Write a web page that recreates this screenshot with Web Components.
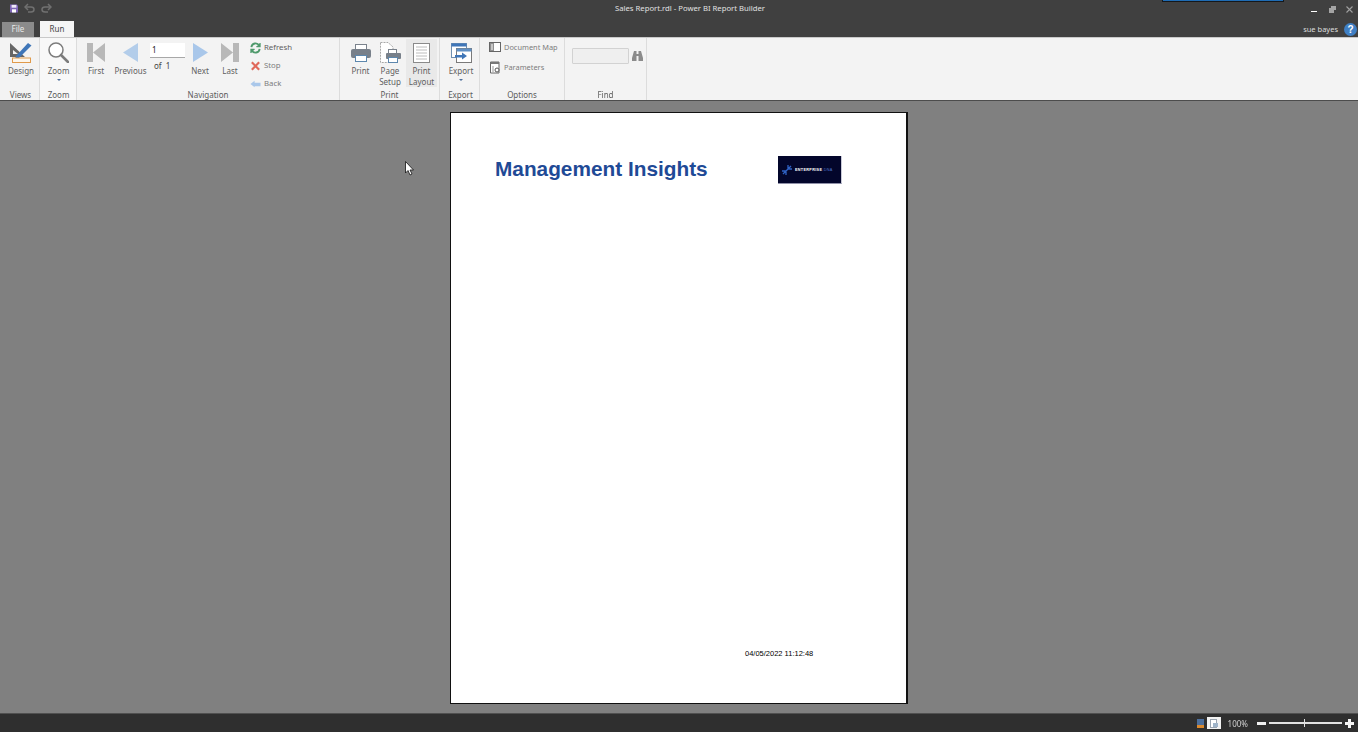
<!DOCTYPE html>
<html>
<head>
<meta charset="utf-8">
<title>Sales Report.rdl - Power BI Report Builder</title>
<style>
  html, body { margin: 0; height: 100%; overflow: hidden; }
  /* the reference is a soft video frame, hence the slight blur */
  body { display: flex; flex-direction: column; height: 732px; font-family: "Noto Sans", sans-serif; filter: blur(0.3px); }
</style>
</head>
<body>
<rb-titlebar title-text="Sales Report.rdl - Power BI Report Builder" user="sue bayes"></rb-titlebar>

<rb-ribbon>
  <rb-group label="Views" style="width:40px">
    <rb-button style="width:40px;margin-left:1px">
      <svg slot="icon" width="22" height="21" viewBox="0 0 22 21">
        <path d="M0 1 L0 15 L15 15 Z M3 8 L3 12 L8 12 Z" fill="#666" fill-rule="evenodd"/>
        <path d="M6 14 L18 1 L21.500 3.500 L9 16 L5 17 Z" fill="#3f76b8"/>
        <rect x="2.500" y="16" width="18" height="4.500" fill="#fdf6ea" stroke="#e09a4a"/>
      </svg>Design</rb-button>
  </rb-group>
  <rb-group label="Zoom" style="width:37px;background:#f8f8f8">
    <rb-button style="width:37px" drop>
      <svg slot="icon" width="21" height="21" viewBox="0 0 21 21">
        <circle cx="8" cy="8" r="7" fill="#fff" stroke="#7c7c7c" stroke-width="1.5"/>
        <path d="M13 13 L20 20" stroke="#7c7c7c" stroke-width="2.600" stroke-linecap="round"/>
      </svg>Zoom</rb-button>
  </rb-group>
  <rb-group label="Navigation" style="width:263px">
    <rb-button style="width:38px">
      <svg slot="icon" width="18" height="19" viewBox="0 0 18 19"><path d="M0 0h6v19H0z M6 9.500 L18 0 V19 Z" fill="#b8b8b8"/></svg>First</rb-button>
    <rb-button style="width:31px">
      <svg slot="icon" width="15" height="19" viewBox="0 0 15 19"><path d="M0 9.500 L15 0 V19 Z" fill="#b3cdea"/></svg>Previous</rb-button>
    <rb-pager page="1" total="1"></rb-pager>
    <rb-button style="width:30px">
      <svg slot="icon" width="15" height="19" viewBox="0 0 15 19"><path d="M15 9.500 L0 0 V19 Z" fill="#a9c7ea"/></svg>Next</rb-button>
    <rb-button style="width:30px">
      <svg slot="icon" width="18" height="19" viewBox="0 0 18 19"><path d="M12 0h6v19h-6z M12 9.500 L0 0 V19 Z" fill="#b8b8b8"/></svg>Last</rb-button>
    <rb-stack style="margin-left:5px;gap:5px">
      <rb-small style="font-size:7.800px">
        <svg slot="icon" width="11" height="12" viewBox="0 0 12 12" fill="none" stroke="#4f9a6c" stroke-width="2"><path d="M1.500 5 A4.500 4.500 0 0 1 10 3.500 M10.500 7 A4.500 4.500 0 0 1 2 8.500"/><path d="M11 0.500 V4.500 H7 M1 11.500 V7.500 H5" stroke-width="1.200" fill="#4f9a6c"/></svg>Refresh</rb-small>
      <rb-small dim style="font-size:7.800px">
        <svg slot="icon" width="11" height="12" viewBox="0 0 12 12"><path d="M2 2 L10 10 M10 2 L2 10" stroke="#e0685a" stroke-width="2.400"/></svg>Stop</rb-small>
      <rb-small dim style="font-size:7.800px">
        <svg slot="icon" width="11" height="12" viewBox="0 0 12 12"><path d="M0.500 6 L5 2.500 V4.500 H11.500 V8.500 H5 V9.500 Z" fill="#a9c7ea"/></svg>Back</rb-small>
    </rb-stack>
  </rb-group>
  <rb-group label="Print" style="width:100px;--pad:6px">
    <rb-button style="width:29px">
      <svg slot="icon" width="20" height="18" viewBox="0 0 20 18">
        <rect x="4.500" y="0.500" width="11" height="6" fill="#fff" stroke="#7a828c"/>
        <rect x="0" y="5" width="20" height="9" rx="2" fill="#78808a"/>
        <rect x="4.500" y="11.500" width="11" height="6" fill="#fff" stroke="#5d87ad"/>
      </svg>Print</rb-button>
    <rb-button style="width:30px">
      <svg slot="icon" width="21" height="21" viewBox="0 0 21 21">
        <path d="M0.500 0.500 H8 L13 5 V20.500 H0.500 Z" fill="#fff" stroke="#a8a8a8" stroke-dasharray="2 1"/>
        <rect x="8.500" y="7.500" width="8" height="5" fill="#fff" stroke="#7a828c"/>
        <rect x="6" y="11" width="15" height="6" rx="1" fill="#78808a"/>
        <rect x="8.500" y="15.500" width="9" height="5" fill="#fff" stroke="#5d87ad"/>
      </svg>Page<br>Setup</rb-button>
    <rb-button style="width:31px;margin:-2px 0 0 1px;padding-top:2px;height:48px" active>
      <svg slot="icon" width="17" height="20" viewBox="0 0 17 20">
        <rect x="0.500" y="0.500" width="16" height="19" fill="#fff" stroke="#8a8a8a"/>
        <path d="M3 4h11M3 7h11M3 10h11M3 13h11M3 16h11" stroke="#bcbcbc"/>
      </svg>Print<br>Layout</rb-button>
  </rb-group>
  <rb-group label="Export" style="width:40px">
    <rb-button style="width:40px;margin-left:1px" drop>
      <svg slot="icon" width="21" height="20" viewBox="0 0 21 20">
        <rect x="0.500" y="0.500" width="15" height="14" fill="#fff" stroke="#6f8fb0"/>
        <rect x="0.500" y="0.500" width="15" height="3" fill="#3f76b8"/>
        <rect x="5.500" y="5.500" width="15" height="14" fill="#fff" stroke="#7a7a7a"/>
        <rect x="5.500" y="5.500" width="15" height="3" fill="#5f8fc4"/>
        <path d="M4 12 H11 V9.500 L16 13 L11 16.500 V14.500 H4 Z" fill="#3f76b8"/>
      </svg>Export</rb-button>
  </rb-group>
  <rb-group label="Options" style="width:85px;--pad:9px">
    <rb-stack style="gap:7px">
      <rb-small dim style="font-size:7.400px">
        <svg slot="icon" width="12" height="11" viewBox="0 0 12 11"><rect x="0.500" y="0.500" width="11" height="9" fill="#fff" stroke="#666"/><rect x="1" y="1" width="4" height="8" fill="#8f8f8f"/><path d="M2 3h2M2 5h2M2 7h2" stroke="#fff"/></svg>Document Map</rb-small>
      <rb-small dim style="font-size:7.400px">
        <svg slot="icon" width="12" height="13" viewBox="0 0 12 13"><path d="M1.500 1 H10 V12 H1.500 Z" fill="#fff" stroke="#666"/><rect x="1.500" y="1" width="8.500" height="2" fill="#777"/><path d="M3 6h2M3 8h2M3 10h2" stroke="#999"/><circle cx="8" cy="9" r="2" fill="#fff" stroke="#555"/></svg>Parameters</rb-small>
    </rb-stack>
  </rb-group>
  <rb-group label="Find" style="width:82px;--pad:7px">
    <rb-find></rb-find>
  </rb-group>
</rb-ribbon>

<rb-viewer>
  <rb-page>
    <span slot="title">Management Insights</span>
    <rb-logo slot="logo"></rb-logo>
    <span slot="date">04/05/2022 11:12:48</span>
  </rb-page>
</rb-viewer>

<rb-statusbar zoom="100%"></rb-statusbar>

<script>
function define(name, css, html) {
  customElements.define(name, class extends HTMLElement {
    connectedCallback() {
      if (this.shadowRoot) return;
      this.attachShadow({ mode: 'open' });
      this.shadowRoot.innerHTML = `<style>${css}</style>${typeof html === 'function' ? html(this) : html}`;
    }
  });
}

// ---- window chrome
define('rb-titlebar', `
  :host { display: block; height: 37px; background: #404040; position: relative; color: #e6e6e6; font: 8px "Noto Sans", sans-serif; flex: none; }
  .row1 { display: grid; grid-template-columns: 1fr auto 1fr; height: 21px; align-items: center; }
  .qat { display: flex; gap: 6px; padding: 0 0 5px 10px; align-items: center; }
  .title { padding: 0 0 6px 22px; color: #e0e0e0; font-size: 7.700px; }
  .win { display: flex; justify-content: flex-end; gap: 10px; padding: 0 5px 3px 0; align-items: center; }
  .row2 { display: flex; height: 16px; align-items: flex-end; padding-left: 2px; }
  .tab { height: 15px; line-height: 14px; text-align: center; }
  .file { width: 32px; background: #8b8b8b; color: #e8e8e8; }
  .run { width: 34px; height: 16px; line-height: 16px; margin-left: 6px; background: #f5f5f5; color: #444; }
  .user { margin-left: auto; align-self: center; display: flex; align-items: center; gap: 6px; padding-right: 1px; color: #dcdcdc; font-size: 7.500px; }
  .help { width: 13px; height: 13px; border-radius: 50%; background: #3f7fc4; color: #fff; font: bold 10px/13px "Liberation Sans", sans-serif; text-align: center; }
  .flash { position: absolute; left: 1162px; top: 0; width: 120px; height: 1px; background: #1f6cb4; border-bottom: 1px solid #15181c; border-left: 1px solid #15181c; border-right: 1px solid #15181c; }
`, (el) => `
  <div class="flash"></div>
  <div class="row1">
    <div class="qat">
      <svg width="8" height="9" viewBox="0 0 10 10"><path d="M0 0h8.500L10 1.500V10H0z" fill="#7f66b8"/><rect x="2" y="0.500" width="6" height="3.500" fill="#efeaf8"/><rect x="2.500" y="6" width="5" height="4" fill="#fff"/></svg>
      <svg width="11" height="10" viewBox="0 0 11 10" fill="none" stroke="#707070" stroke-width="1.500"><path d="M1 4 H7 A3 2.500 0 0 1 7 9 H4"/><path d="M4 1 L1 4 L4 7"/></svg>
      <svg width="11" height="10" viewBox="0 0 11 10" fill="none" stroke="#707070" stroke-width="1.500"><path d="M10 4 H4 A3 2.500 0 0 0 4 9 H7"/><path d="M7 1 L10 4 L7 7"/></svg>
    </div>
    <div class="title">${el.getAttribute('title-text')}</div>
    <div class="win">
      <svg width="6" height="6" viewBox="0 0 6 6"><path d="M0 5h6v1H0z" fill="#fff"/></svg>
      <svg width="7" height="7" viewBox="0 0 7 7" style="margin-left:2px"><path d="M2 0h5v4H2z M0 2h5v5H0z" fill="#a4a4a4"/></svg>
      <svg width="7" height="7" viewBox="0 0 7 7"><path d="M0.500 0.500L6.500 6.500M6.500 0.500L0.500 6.500" stroke="#a0a0a0" stroke-width="1.100"/></svg>
    </div>
  </div>
  <div class="row2">
    <div class="tab file">File</div>
    <div class="tab run">Run</div>
    <div class="user">${el.getAttribute('user')}<div class="help">?</div></div>
  </div>`);

// ---- ribbon
define('rb-ribbon', `
  :host { display: flex; height: 64px; box-sizing: border-box; background: #f3f3f3; border-top: 1px solid #c9c9c9; border-bottom: 1px solid #4c4c4c; flex: none; }
`, `<slot></slot>`);

define('rb-group', `
  :host { display: grid; grid-template-rows: 1fr 11px; height: 100%; box-sizing: border-box; border-right: 1px solid #dcdcdc; flex: none; }
  .body { display: flex; align-items: flex-start; min-height: 0; padding: 3px 0 0 var(--pad, 0); }
  .label { text-align: center; font: 8px/11px "Noto Sans", sans-serif; color: #5c5c5c; }
`, (el) => `<div class="body"><slot></slot></div><div class="label">${el.getAttribute('label')}</div>`);

define('rb-button', `
  :host { display: flex; flex-direction: column; align-items: center; box-sizing: border-box; height: 46px; flex: none; font: 8px/11px "Noto Sans", sans-serif; color: #606060; text-align: center; }
  :host([active]) { background: #e9e9e9; }
  .icon { height: 23px; display: flex; align-items: center; justify-content: center; margin-bottom: 1px; }
  .text { white-space: nowrap; }
  .drop { width: 0; height: 0; border: 2px solid transparent; border-top: 2px solid #4d6f9c; border-bottom: 0; margin-top: 3px; }
`, (el) => `<div class="icon"><slot name="icon"></slot></div><div class="text"><slot></slot></div>${el.hasAttribute('drop') ? '<div class="drop"></div>' : ''}`);

define('rb-stack', `
  :host { display: flex; flex-direction: column; }
`, `<slot></slot>`);

define('rb-small', `
  :host { display: flex; align-items: center; gap: 3px; height: 13px; font: 8px/13px "Noto Sans", sans-serif; color: #606060; white-space: nowrap; }
  :host([dim]) { color: #7d7d7d; }
`, `<slot name="icon"></slot><slot></slot>`);

define('rb-pager', `
  :host { display: block; width: 35px; margin: 2px 0 0 4px; flex: none; font: 8px/11px "Noto Sans", sans-serif; color: #444; }
  .box { height: 15px; box-sizing: border-box; background: #fff; border-bottom: 1px solid #a8a8a8; padding-left: 2px; line-height: 14px; color: #222; }
  .of { padding: 2px 0 0 4px; word-spacing: 2px; }
`, (el) => `<div class="box">${el.getAttribute('page')}</div><div class="of">of ${el.getAttribute('total')}</div>`);

define('rb-find', `
  :host { display: flex; align-items: center; gap: 3px; padding-top: 7px; }
  .input { width: 57px; height: 16px; box-sizing: border-box; background: #efefef; border: 1px solid #d2d2d2; border-radius: 1px; }
`, `<div class="input"></div>
  <svg width="11" height="10" viewBox="0 0 11 10"><path d="M2 0h2.500v3H6.500V0H9l2 7v3H6.500V5h-2v5H0V7z" fill="#8b8b8b"/></svg>`);

// ---- report area
define('rb-viewer', `
  :host { display: flex; justify-content: center; align-items: flex-start; flex: 1; min-height: 0; background: #808080; padding: 11px 0 0 0; box-sizing: border-box; position: relative; }
  svg { position: absolute; left: 405px; top: 60px; }
`, `<slot></slot>
  <svg width="10" height="15" viewBox="0 0 10 15"><path d="M0.500 0.500V12L3 9.500L5 14L7 13L5 9H8.500Z" fill="#fff" stroke="#111" stroke-width="0.800"/></svg>`);

define('rb-page', `
  :host { display: flex; flex-direction: column; width: 458px; height: 592px; box-sizing: border-box; background: #fff; border: 1px solid #111; border-right-width: 2px; padding: 43px 0 0 44px; }
  .head { display: flex; align-items: center; height: 28px; }
  .title { width: 283px; padding-bottom: 2px; font: bold 20.800px/26px "Liberation Sans", sans-serif; color: #1f4a96; white-space: nowrap; }
  .foot { margin-top: auto; padding: 0 0 44px 250px; font: 7.500px/11px "Liberation Sans", sans-serif; color: #000; white-space: nowrap; }
`, `<div class="head"><div class="title"><slot name="title"></slot></div><slot name="logo"></slot></div>
  <div class="foot"><slot name="date"></slot></div>`);

define('rb-logo', `
  :host { display: flex; align-items: center; width: 64px; height: 28px; box-sizing: border-box; padding-left: 4px; gap: 3px; background: #03062b; border-bottom: 1px solid #8f90a8; border-right: 1px solid #c9cad8; font: bold 3.800px "Liberation Sans", sans-serif; letter-spacing: 0.300px; color: #fff; white-space: nowrap; }
  span { color: #4d74c9; font-weight: normal; }
`, `<svg width="10" height="10" viewBox="0 0 10 10"><path d="M1 9L9 1M0 6L4 6L4 10M6 0L6 4L10 4" stroke="#2f62c4" stroke-width="1.300" fill="none"/></svg><div>ENTERPRISE <span>DNA</span></div>`);

// ---- status bar
define('rb-statusbar', `
  :host { display: flex; align-items: center; justify-content: flex-end; height: 19px; box-sizing: border-box; background: #2f2f2f; border-top: 1px solid #505050; flex: none; padding-right: 4px; font: 8px "Noto Sans", sans-serif; color: #d0d0d0; }
  .view { display: flex; width: 13px; height: 12px; align-items: center; justify-content: center; }
  .on { background: #f2f2f2; width: 14px; margin-left: 0; }
  .pct { margin: 0 9px 0 7px; }
  .track { width: 73px; height: 2px; background: #e2e2e2; margin: 0 3px 0 3px; position: relative; }
  .tick { position: absolute; left: 35px; top: -3px; width: 1px; height: 8px; background: #e2e2e2; }
`, (el) => `
  <div class="view"><svg width="7" height="9" viewBox="0 0 7 9"><rect width="7" height="6" fill="#4d6f9c"/><rect y="6" width="7" height="3" fill="#dc8a2e"/></svg></div>
  <div class="view on"><svg width="8" height="9" viewBox="0 0 8 9"><rect x="0.500" y="0.500" width="6" height="8" fill="#fff" stroke="#9aa4b0"/><rect x="3" y="4" width="5" height="4" fill="#9fb4c9"/></svg></div>
  <div class="pct">${el.getAttribute('zoom')}</div>
  <svg width="9" height="3" viewBox="0 0 9 3"><rect width="9" height="3" fill="#f0f0f0"/></svg>
  <div class="track"><div class="tick"></div></div>
  <svg width="9" height="9" viewBox="0 0 9 9"><path d="M3 0h3v3h3v3H6v3H3V6H0V3h3z" fill="#f5f5f5"/></svg>`);
</script>
</body>
</html>
